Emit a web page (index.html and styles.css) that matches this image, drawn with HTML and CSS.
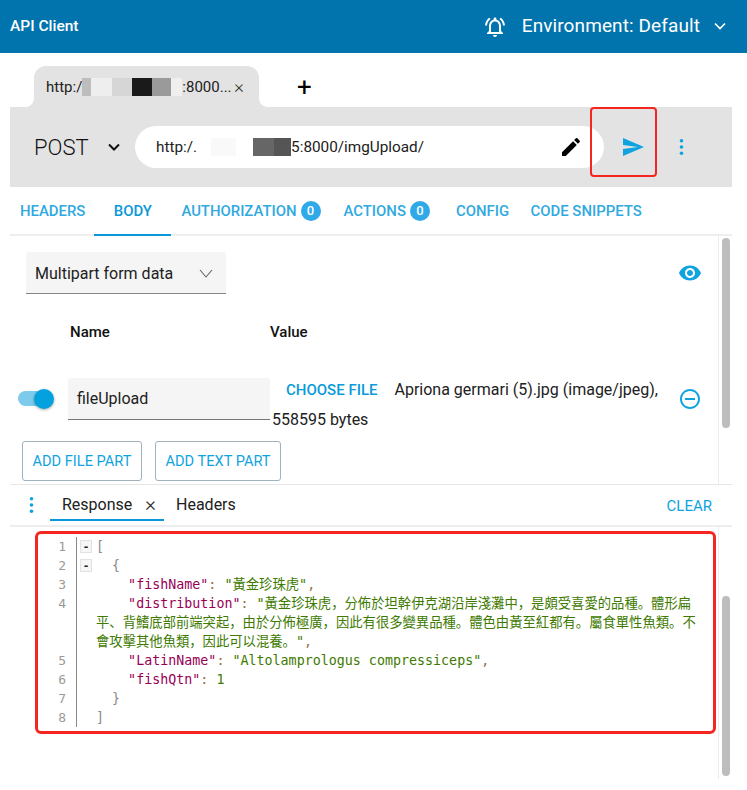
FILE: index.html
```html
<!DOCTYPE html>
<html lang="en">
<head>
<meta charset="utf-8">
<title>API Client</title>
<link rel="stylesheet" href="styles.css">
</head>
<body>
<header class="app-bar">
  <span class="app-title">API Client</span>
  <svg class="bell" viewBox="0 0 24 24"><path d="M7.58 4.08L6.15 2.65C3.75 4.48 2.17 7.3 2.03 10.5h2c.15-2.65 1.51-4.97 3.55-6.42zm12.39 6.42h2c-.15-3.2-1.73-6.02-4.12-7.85l-1.42 1.43c2.02 1.45 3.39 3.77 3.54 6.42zM18 16v-5c0-3.07-1.63-5.64-4.5-6.32V4c0-.83-.67-1.5-1.5-1.5s-1.5.67-1.5 1.5v.68C7.64 5.36 6 7.92 6 11v5l-2 2v1h16v-1l-2-2zm-2 1H8v-6c0-2.48 1.51-4.5 4-4.5s4 2.02 4 4.5v6zM10 20h4c0 1.1-.9 2-2 2s-2-.9-2-2z"/></svg>
  <span class="env">Environment: Default</span>
  <svg class="env-chevron" viewBox="0 0 12 8"><path d="M1 1.5l5 5 5-5"/></svg>
</header>

<main class="workspace">
  <div class="request-tabs">
    <div class="request-tab">
      <span class="tab-url">http:/<i class="blur b1"></i><i class="blur b2"></i><i class="blur b3"></i><i class="blur b4"></i><i class="blur b5"></i><i class="blur b6"></i>:8000...</span>
      <span class="tab-close">×</span>
    </div>
    <span class="tab-add">+</span>
  </div>

  <section class="url-bar">
    <span class="method">POST</span>
    <svg class="method-chevron" viewBox="0 0 12 8"><path d="M1 1.5l5 5 5-5"/></svg>
    <div class="url-pill">
      <span class="url-text">http:/.<i class="blur u1"></i><i class="blur u2"></i><i class="blur u3"></i><i class="blur u4"></i><i class="blur u5"></i>5:8000/imgUpload/</span>
      <svg class="pencil" viewBox="0 0 24 24"><path d="M3 17.25V21h3.75L17.81 9.94l-3.75-3.75L3 17.25zM20.71 7.04c.39-.39.39-1.02 0-1.41l-2.34-2.34c-.39-.39-1.02-.39-1.41 0l-1.83 1.83 3.75 3.75 1.83-1.83z"/></svg>
    </div>
    <svg class="send" viewBox="0 0 24 24"><path d="M2.01 21L23 12 2.01 3 2 10l15 2-15 2z"/></svg>
    <svg class="kebab" viewBox="0 0 4 16"><circle cx="2" cy="2.5" r="1.6"/><circle cx="2" cy="8" r="1.6"/><circle cx="2" cy="13.5" r="1.6"/></svg>
    <span class="annot annot-send"></span>
  </section>

  <nav class="section-tabs">
    <span class="s-tab t-headers">Headers</span>
    <span class="s-tab t-body active">Body</span>
    <span class="s-tab t-auth">Authorization<b class="badge">0</b></span>
    <span class="s-tab t-actions">Actions<b class="badge">0</b></span>
    <span class="s-tab t-config">Config</span>
    <span class="s-tab t-snippets">Code Snippets</span>
  </nav>

  <section class="body-panel">
    <div class="body-content">
      <div class="body-type-row">
        <div class="select">
          <span>Multipart form data</span>
          <svg class="select-chevron" viewBox="0 0 14 9"><path d="M1 1l6 7 6-7"/></svg>
        </div>
        <svg class="eye" viewBox="0 0 24 24"><path d="M12 4.5C7 4.5 2.73 7.61 1 12c1.73 4.39 6 7.5 11 7.5s9.27-3.11 11-7.5c-1.73-4.39-6-7.5-11-7.5zM12 17c-2.76 0-5-2.24-5-5s2.24-5 5-5 5 2.24 5 5-2.24 5-5 5zm0-8c-1.66 0-3 1.34-3 3s1.34 3 3 3 3-1.34 3-3-1.34-3-3-3z"/></svg>
      </div>
      <div class="col-heads"><span class="col-name">Name</span><span>Value</span></div>
      <div class="part-row">
        <span class="toggle"><i class="toggle-thumb"></i></span>
        <div class="part-name">fileUpload</div>
        <div class="part-value"><span class="choose">CHOOSE FILE</span>Apriona germari (5).jpg (image/jpeg), 558595 bytes</div>
        <svg class="remove" viewBox="0 0 24 24"><path d="M7 11v2h10v-2H7zm5-9C6.48 2 2 6.48 2 12s4.48 10 10 10 10-4.48 10-10S17.52 2 12 2zm0 18c-4.41 0-8-3.59-8-8s3.59-8 8-8 8 3.59 8 8-3.59 8-8 8z"/></svg>
      </div>
      <div class="part-actions">
        <span class="outline-btn">Add file part</span>
        <span class="outline-btn">Add text part</span>
      </div>
    </div>
    <div class="scroll-track"><i class="thumb thumb-top"></i></div>
  </section>

  <section class="response-head">
    <svg class="kebab small" viewBox="0 0 4 16"><circle cx="2" cy="2.5" r="1.6"/><circle cx="2" cy="8" r="1.6"/><circle cx="2" cy="13.5" r="1.6"/></svg>
    <div class="resp-tab"><span>Response</span><span class="resp-close">×</span></div>
    <span class="resp-headers">Headers</span>
    <span class="clear">CLEAR</span>
  </section>

  <section class="response-body">
    <div class="editor-area">
      <div class="editor">
        <div class="line"><span class="ln">1</span><span class="fold">-</span><span class="code"><span class="p">[</span></span></div>
        <div class="line"><span class="ln">2</span><span class="fold">-</span><span class="code"><span class="p">  {</span></span></div>
        <div class="line"><span class="ln">3</span><span class="nofold"></span><span class="code">    <span class="k">"fishName"</span><span class="c">: </span><span class="s">"黃金珍珠虎"</span><span class="c">,</span></span></div>
        <div class="line"><span class="ln">4</span><span class="nofold"></span><span class="code">    <span class="k">"distribution"</span><span class="c">: </span><span class="s">"黃金珍珠虎，分佈於坦幹伊克湖沿岸淺灘中，是頗受喜愛的品種。體形扁<br>平、背鰭底部前端突起，由於分佈極廣，因此有很多變異品種。體色由黃至紅都有。屬食單性魚類。不<br>會攻擊其他魚類，因此可以混養。"</span><span class="c">,</span></span></div>
        <div class="line"><span class="ln">5</span><span class="nofold"></span><span class="code">    <span class="k">"LatinName"</span><span class="c">: </span><span class="s">"Altolamprologus compressiceps"</span><span class="c">,</span></span></div>
        <div class="line"><span class="ln">6</span><span class="nofold"></span><span class="code">    <span class="k">"fishQtn"</span><span class="c">: </span><span class="s">1</span></span></div>
        <div class="line"><span class="ln">7</span><span class="nofold"></span><span class="code"><span class="p">  }</span></span></div>
        <div class="line"><span class="ln">8</span><span class="nofold"></span><span class="code"><span class="p">]</span></span></div>
      </div>
      <span class="annot annot-editor"></span>
    </div>
    <div class="scroll-track lower"><i class="thumb thumb-bottom"></i></div>
  </section>
</main>
</body>
</html>
```
FILE: styles.css
```css
* { box-sizing: border-box; }
html, body { margin: 0; padding: 0; }
body {
  width: 747px;
  height: 790px;
  overflow: hidden;
  background: #fff;
  font-family: Roboto, "Noto Sans CJK SC", sans-serif;
  color: #212121;
}
i { display: block; font-style: normal; }

.app-bar {
  height: 53px;
  background: #0274ad;
  color: #fff;
  display: flex;
  align-items: center;
  padding: 0 21px 2px 10px;
}
.app-title { font-size: 15.5px; font-weight: 500; }
.bell { width: 24px; height: 24px; fill: #fff; margin-left: auto; margin-right: 15px; margin-top: 3px; }
.env { font-size: 19px; font-weight: 400; letter-spacing: 0.1px; }
.env-chevron { width: 12px; height: 8px; margin-left: 14px; fill: none; stroke: #fff; stroke-width: 1.7; }

.workspace { padding: 0 15px 0 10px; }

.request-tabs { height: 54px; display: flex; align-items: flex-end; padding-left: 24px; }
.request-tab {
  position: relative;
  width: 225px;
  height: 41px;
  background: #e3e3e3;
  border-radius: 12px 12px 0 0;
  display: flex;
  align-items: flex-start;
  padding: 11px 0 0 12px;
  font-size: 15px;
}
.request-tab::before, .request-tab::after {
  content: "";
  position: absolute;
  bottom: 0;
  width: 8px;
  height: 8px;
  background: radial-gradient(circle at 0 0, #fff 7.5px, #e3e3e3 8px);
}
.request-tab::before { left: -8px; }
.request-tab::after { right: -8px; transform: scaleX(-1); }
.tab-url { display: flex; align-items: center; height: 20px; white-space: nowrap; }
.tab-close { position: absolute; left: 200px; top: 9px; font-size: 19px; font-weight: 300; line-height: 24px; color: #333; }
.tab-add { font-size: 26px; font-weight: 400; line-height: 1; margin: 0 0 7px 38px; color: #000; }

.blur { height: 18px; flex: none; }
.b1 { width: 9px; background: #bdbdbd; }
.b2 { width: 21px; background: #eee; }
.b3 { width: 20px; background: #d6d6d6; }
.b4 { width: 20px; background: #1a1a1a; }
.b5 { width: 19px; background: #9a9a9a; }
.b6 { width: 11px; background: #efefef; }
.u1 { width: 14px; background: #fff; }
.u2 { width: 25px; background: #f9f9f9; }
.u3 { width: 17px; background: #fff; }
.u4 { width: 21px; background: #666; }
.u5 { width: 17px; background: #555; }

.url-bar {
  position: relative;
  height: 80px;
  background: #e3e3e3;
  display: flex;
  align-items: center;
  padding-left: 24px;
}
.method { font-size: 22px; font-weight: 300; color: #111; width: 74px; }
.method-chevron { width: 12px; height: 8px; fill: none; stroke: #111; stroke-width: 2; }
.url-pill {
  width: 469px;
  height: 42px;
  margin-left: 15px;
  background: #fff;
  border-radius: 21px;
  display: flex;
  align-items: center;
  padding: 0 21px 0 21px;
  font-size: 15.3px;
  justify-content: space-between;
}
.url-text { display: flex; align-items: center; white-space: nowrap; }
.pencil { width: 24px; height: 24px; fill: #000; }
.send { width: 24px; height: 24px; fill: #0fa3e0; margin-left: 17px; }
.kebab { width: 5px; height: 18px; fill: #0fa3e0; margin-left: 34px; }
.annot { position: absolute; border-radius: 4px; pointer-events: none; }
.annot-send { left: 580px; top: 0; width: 67px; height: 70px; border: 2.5px solid #f5261f; }

.section-tabs {
  position: relative;
  height: 49px;
  border-bottom: 2px solid #eee;
  display: flex;
  align-items: center;
  font-size: 14.9px;
  font-weight: 500;
  color: #2fa9e0;
  text-transform: uppercase;
}
.s-tab { display: flex; align-items: center; height: 100%; flex: none; }
.t-headers { margin-left: 10px; }
.t-body { margin-left: 9px; width: 77px; justify-content: center; color: #0a98d8; }
.t-auth { margin-left: 10px; }
.t-actions { margin-left: 23px; }
.t-config { margin-left: 26px; }
.t-snippets { margin-left: 21.5px; }
.active { position: relative; }
.active::after {
  content: "";
  position: absolute;
  left: 0; right: 0; bottom: -2px;
  height: 2px;
  background: #0a98d8;
}
.badge {
  width: 20px; height: 20px;
  margin-left: 4px;
  border-radius: 50%;
  background: #2fa9e8;
  color: #fff;
  font-size: 13px;
  font-weight: 500;
  text-align: center;
  line-height: 20px;
}

.body-panel { height: 249px; display: flex; border-bottom: 1px solid #e6e6e6; }
.body-content { width: 708px; flex: none; }
.scroll-track {
  width: 14px;
  flex: none;
  border-left: 1px solid #ececec;
  padding: 2px 0 0 3px;
}
.thumb { width: 8px; background: #bdbdbd; border-radius: 4px; }
.thumb-top { height: 190px; }

.body-type-row { display: flex; align-items: center; padding: 16px 16px 0 16px; justify-content: space-between; }
.select {
  width: 200px;
  height: 42px;
  background: #f5f5f5;
  border-bottom: 1px solid #858585;
  border-radius: 3px 3px 0 0;
  display: flex;
  align-items: center;
  justify-content: space-between;
  padding: 1px 13px 0 9px;
  font-size: 16px;
}
.select-chevron { width: 14px; height: 9px; fill: none; stroke: #666; stroke-width: 1.1; }
.eye { width: 24px; height: 24px; fill: #0fa3e0; }

.col-heads { display: flex; padding: 29px 0 0 60px; font-size: 15px; font-weight: 500; color: #111; height: 84px; }
.col-name { width: 200px; }

.part-row { position: relative; height: 63px; padding-left: 58px; display: flex; align-items: flex-start; }
.toggle {
  position: absolute;
  left: 8px; top: 13px;
  width: 27px; height: 15px;
  background: #7ccbec;
  border-radius: 8px;
}
.toggle-thumb {
  position: absolute;
  left: 16px; top: -2.5px;
  width: 20px; height: 20px;
  border-radius: 50%;
  background: #03a2df;
  box-shadow: 0 1px 3px rgba(0,0,0,.35);
}
.part-name {
  width: 202px;
  height: 42px;
  background: #f5f5f5;
  border-bottom: 1px solid #777;
  border-radius: 3px 3px 0 0;
  padding: 0 9px;
  font-size: 16px;
  line-height: 41px;
  flex: none;
}
.part-value {
  width: 400px;
  flex: none;
  margin-left: 2px;
  font-size: 16px;
  line-height: 29px;
  margin-top: -3px;
}
.choose { color: #0a9bd8; font-size: 15px; font-weight: 500; margin: 0 17px 0 14px; }
.remove { width: 24px; height: 24px; fill: #0fa3e0; position: absolute; left: 668px; top: 9px; }

.part-actions { display: flex; gap: 13px; padding-left: 12px; }
.outline-btn {
  height: 40px;
  padding: 0 9.5px;
  border: 1px solid #9fb2bd;
  border-radius: 3px;
  font-size: 14.6px;
  color: #0fa3e0;
  text-transform: uppercase;
  line-height: 38px;
}

.response-head {
  position: relative;
  height: 42px;
  display: flex;
  align-items: center;
  border-bottom: 2px solid #eee;
  font-size: 16px;
}
.kebab.small { margin-left: 19px; }
.resp-tab {
  position: relative;
  width: 114px;
  height: 100%;
  margin-left: 16px;
  padding-left: 12px;
  display: flex;
  align-items: center;
  padding-bottom: 2px;
}
.resp-tab::after {
  content: "";
  position: absolute;
  left: 0; right: 0; bottom: 4px;
  height: 2px;
  background: #0a98d8;
}
.resp-close { position: absolute; left: 95px; font-size: 21px; font-weight: 300; color: #222; }
.resp-headers { margin-left: 12px; padding-bottom: 2px; }
.clear { margin-left: auto; margin-right: 20px; color: #0fa3e0; font-size: 15px; font-weight: 400; padding-top: 1px; }

.response-body { display: flex; height: 252px; }
.editor-area { position: relative; width: 708px; flex: none; }
.editor {
  padding: 10px 0 0 25px;
  font-family: "DejaVu Sans Mono", "Noto Sans CJK SC", monospace;
  font-size: 13.33px;
  line-height: 19px;
}
.line { display: flex; }
.ln { width: 42px; color: #9a9a9a; text-align: right; padding-right: 10px; border-right: 1px solid #8a8a8a; flex: none; font-size: 13px; }
.fold {
  flex: none;
  width: 12px; height: 13px;
  margin: 3px 4px 0 3px;
  background: #f6f6f6;
  border: 1px solid #e2e2e2;
  color: #222;
  font-size: 11px;
  font-weight: 700;
  line-height: 11px;
  text-align: center;
}
.nofold { width: 19px; flex: none; }
.code { white-space: pre; }
.p { color: #8a8a8a; }
.k { color: #990055; }
.s { color: #3e7a00; }
.c { color: #9a6e3a; }
.annot-editor { left: 25px; top: 4px; width: 681px; height: 203px; border: 3px solid #f5261f; border-radius: 6px; }
.scroll-track.lower { height: 252px; padding-top: 69px; }
.thumb-bottom { height: 180px; }
```
